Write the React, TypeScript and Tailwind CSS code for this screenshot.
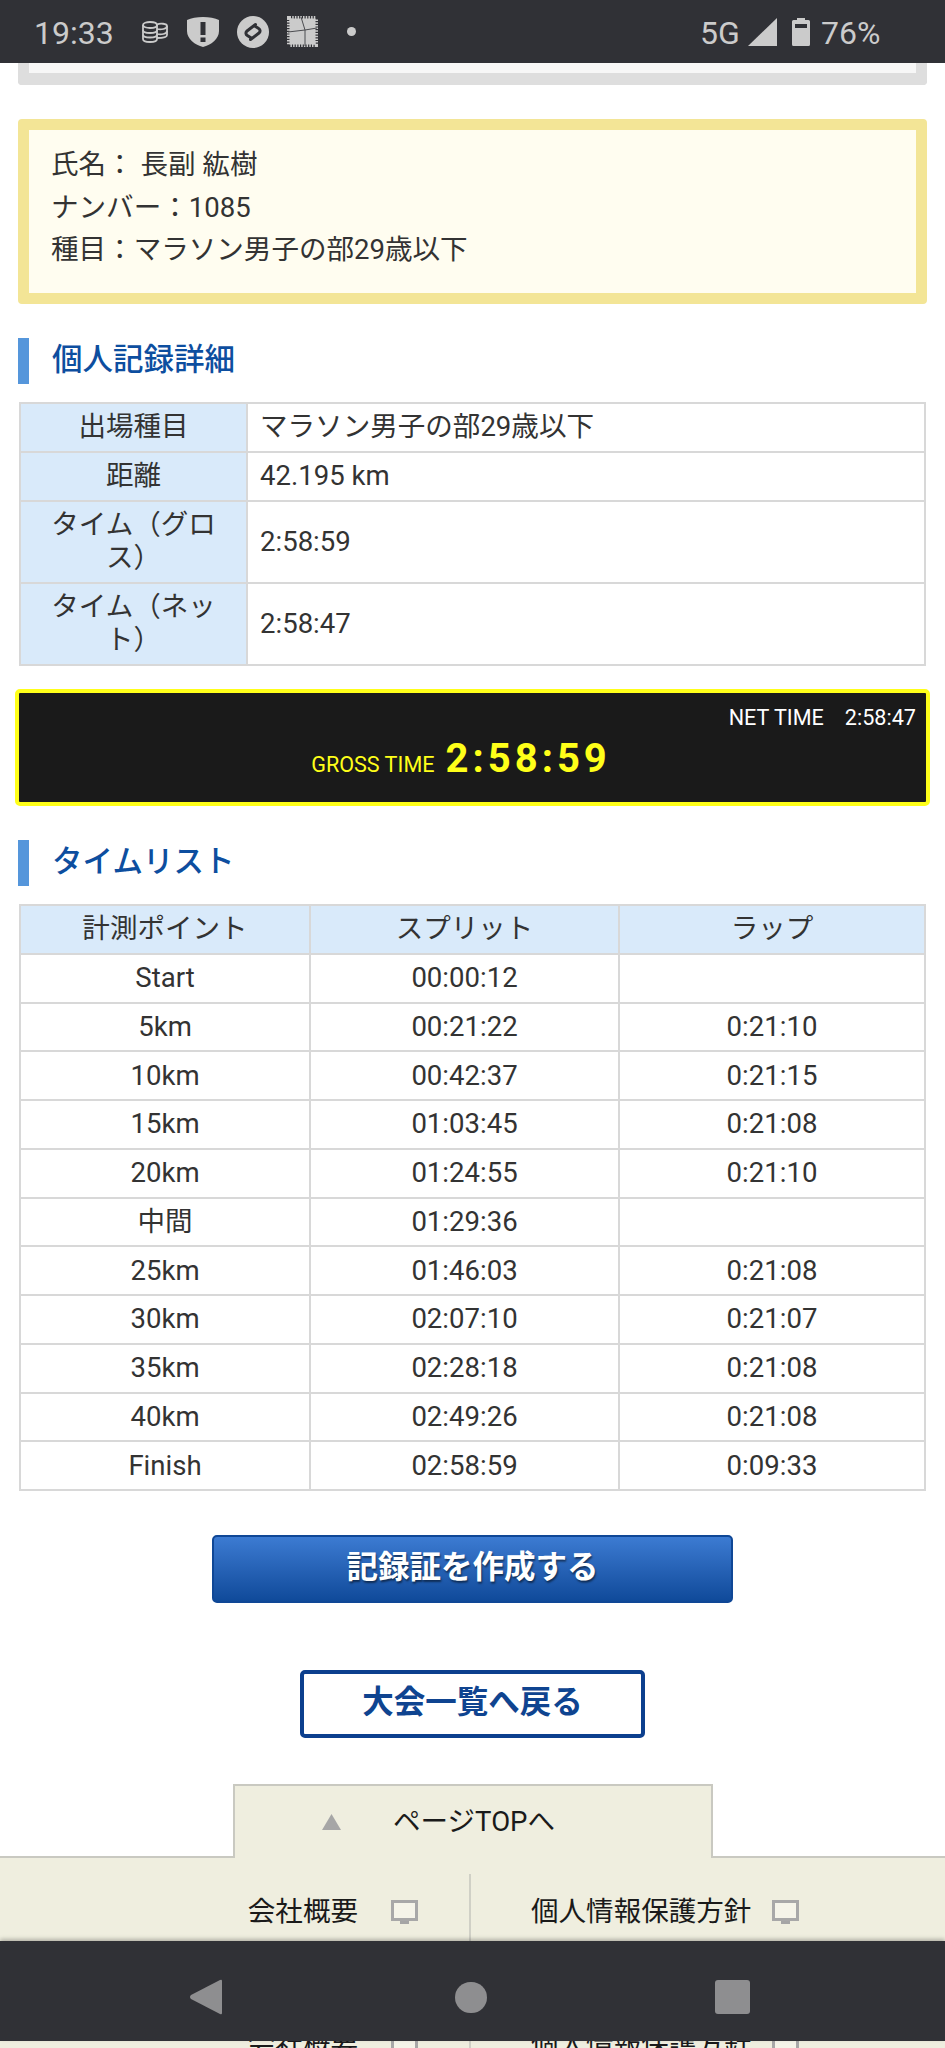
import React from "react";

const rows = [
  ["Start", "00:00:12", ""],
  ["5km", "00:21:22", "0:21:10"],
  ["10km", "00:42:37", "0:21:15"],
  ["15km", "01:03:45", "0:21:08"],
  ["20km", "01:24:55", "0:21:10"],
  ["中間", "01:29:36", ""],
  ["25km", "01:46:03", "0:21:08"],
  ["30km", "02:07:10", "0:21:07"],
  ["35km", "02:28:18", "0:21:08"],
  ["40km", "02:49:26", "0:21:08"],
  ["Finish", "02:58:59", "0:09:33"],
];

const cell = "border-2 border-[#d8d8d8] h-[49px] pt-0 pb-[2px] leading-[33px]";
const listCell = "border-2 border-[#d8d8d8] h-[48.75px] pt-0 pb-[1px] leading-[33px]";

function StatusBar() {
  return (
    <div className="h-[63px] shrink-0 bg-[#303136] flex items-center text-[#cbcbcb] relative z-10">
      <span className="ml-[34px] w-[78px] text-[32px] leading-none pt-[2px]">19:33</span>
      <svg className="ml-[30px]" width="26" height="22" viewBox="0 0 26 22" fill="none" stroke="#cbcbcb" strokeWidth="1.8">
        <path d="M1 4c0-2 3.5-3 7-3s7 1 7 3-3.5 3-7 3-7-1-7-3z" />
        <path d="M1 4v14c0 2 3.5 3 7 3s7-1 7-3V4" />
        <path d="M1 9c0 2 3.5 3 7 3s7-1 7-3" />
        <path d="M1 13.500c0 2 3.500 3 7 3s7-1 7-3" />
        <path d="M15 3.500c3-1.500 10-1 10 1.500v9c0 2-5 3-10 3" />
        <path d="M15 8c4 1 10 0 10-3" />
        <path d="M15 13c4 1 10 0 10-3" />
      </svg>
      <svg className="ml-[19px]" width="32" height="30" viewBox="0 0 32 30">
        <path d="M16 0C22 0 28 1 32 3V14C32 22 24 28 16 30C8 28 0 22 0 14V3C4 1 10 0 16 0Z" fill="#cbcbcb" />
        <rect x="13.500" y="5" width="5" height="13" fill="#303136" />
        <rect x="13.500" y="20.500" width="5" height="4.500" fill="#303136" />
      </svg>
      <svg className="ml-[18px]" width="32" height="32" viewBox="0 0 32 32" fill="none">
        <circle cx="16" cy="16" r="16" fill="#cbcbcb" />
        <path d="M18.500 8.500L10 15a2.700 2.700 0 0 0 .3 4.500l4 2.500" stroke="#303136" strokeWidth="3" strokeLinecap="round" />
        <path d="M13.500 23.500L22 17a2.700 2.700 0 0 0-.3-4.500l-4-2.500" stroke="#303136" strokeWidth="3" strokeLinecap="round" />
      </svg>
      <svg className="ml-[18px]" width="31" height="31" viewBox="0 0 31 31" fill="none">
        <rect x="2.500" y="2.500" width="26" height="26" fill="#cbcbcb" stroke="#cbcbcb" strokeWidth="5" strokeDasharray="1.500 1.200" />
        <rect x="4" y="4" width="23" height="23" fill="#cbcbcb" />
        <path d="M14 1L18 14V30M1 16L18 14L30 12" stroke="#4b4c50" strokeWidth="1" />
      </svg>
      <span className="ml-[29px] w-[9px] h-[9px] rounded-full bg-[#cbcbcb]" />
      <span className="ml-[344px] w-[39px] text-[32px] leading-none pt-[2px]">5G</span>
      <svg className="ml-[9px]" width="29" height="28" viewBox="0 0 29 28">
        <path d="M29 0V28H0Z" fill="#cbcbcb" />
      </svg>
      <svg className="ml-[15px]" width="18" height="28" viewBox="0 0 18 28">
        <path d="M5 2V0H13V2H16.500Q18 2 18 3.500V26.500Q18 28 16.500 28H1.500Q0 28 0 26.500V3.500Q0 2 1.500 2Z" fill="#cbcbcb" />
        <rect x="3" y="6" width="12" height="4" fill="#303136" />
      </svg>
      <span className="ml-[11px] text-[32px] leading-none pt-[2px]">76%</span>
    </div>
  );
}

function SectionTitle({ children }: { children: React.ReactNode }) {
  return (
    <h2 className="border-l-[11px] border-[#5596db] pl-[23px] h-[46px] text-[30.5px] leading-[44px] font-medium text-[#0d4e9f]">
      {children}
    </h2>
  );
}

function MonitorIcon() {
  return (
    <svg width="27" height="25" viewBox="0 0 27 25" className="shrink-0">
      <rect x="1.500" y="1.500" width="24" height="18" fill="#f5f4e9" stroke="#a8a8a8" strokeWidth="3" />
      <rect x="9" y="21" width="9" height="3" fill="#a5a5a5" />
    </svg>
  );
}

function FooterLinks() {
  return (
    <div className="grid grid-cols-[471px_1fr] text-[#1a1a1a] text-[27.56px] leading-[33px] h-[80px]">
      <div className="flex justify-end items-start pt-[21px] pr-[51px] border-r-2 border-[#d0d0c6]">
        <span>会社概要</span>
        <span className="ml-[33px] mt-[5px]"><MonitorIcon /></span>
      </div>
      <div className="flex items-start pt-[21px] pl-[60px]">
        <span>個人情報保護方針</span>
        <span className="ml-[21px] mt-[5px]"><MonitorIcon /></span>
      </div>
    </div>
  );
}

export default function App() {
  return (
    <div
      lang="ja"
      className="h-[2048px] w-[945px] overflow-hidden flex flex-col bg-white text-[#333] text-[27.56px] font-['Roboto','Noto_Sans_CJK_JP',sans-serif]"
    >
      <StatusBar />

      <div className="flex-1 min-h-0 overflow-hidden">
        <div className="mx-[18px]">
          <div className="h-[22px] border-x-[11px] border-b-[12px] border-[#dedede] bg-[#f7f7f7] rounded-b-[4px]" />

          <div className="mt-[34px] h-[185px] border-[11px] border-[#f3e596] rounded-[4px] bg-[#fffdf0] pt-[14px] pl-[22px] leading-[42.500px]">
            <p>氏名： 長副 紘樹</p>
            <p>ナンバー：1085</p>
            <p>種目：マラソン男子の部29歳以下</p>
          </div>

          <div className="mt-[34px]">
            <SectionTitle>個人記録詳細</SectionTitle>
          </div>

          <table className="mt-[18px] ml-px w-[907px] table-fixed border-collapse">
            <colgroup>
              <col className="w-[227px]" />
              <col />
            </colgroup>
            <tbody>
              <tr>
                <th className={`${cell} bg-[#d9eafa] font-normal px-5 text-center`}>出場種目</th>
                <td className={`${cell} px-[12px]`}>マラソン男子の部29歳以下</td>
              </tr>
              <tr>
                <th className={`${cell} bg-[#d9eafa] font-normal px-5 text-center`}>距離</th>
                <td className={`${cell} px-[12px]`}>42.195 km</td>
              </tr>
              <tr>
                <th className={`${cell} bg-[#d9eafa] font-normal px-5 text-center !h-[82px]`}>タイム（グロス）</th>
                <td className={`${cell} px-[12px] !h-[82px]`}>2:58:59</td>
              </tr>
              <tr>
                <th className={`${cell} bg-[#d9eafa] font-normal px-5 text-center !h-[82px]`}>タイム（ネット）</th>
                <td className={`${cell} px-[12px] !h-[82px]`}>2:58:47</td>
              </tr>
            </tbody>
          </table>

          <div className="mt-[23px] -mx-[3px] h-[117px] border-4 border-[#ffff19] rounded-[5px] bg-[#1a1a1a] pt-[12px]">
            <div className="flex justify-end pr-[10px] text-white text-[21.6px] leading-[26px]">
              <span>NET TIME</span>
              <span className="ml-[21px]">2:58:47</span>
            </div>
            <div className="flex justify-center items-baseline pr-[23px] pt-[4px] text-[#ffff19] leading-[48px]">
              <span className="text-[21.6px]">GROSS TIME</span>
              <span className="ml-[11px] text-[40px] font-bold tracking-[4px]">2:58:59</span>
            </div>
          </div>

          <div className="mt-[34px]">
            <SectionTitle>タイムリスト</SectionTitle>
          </div>

          <table className="mt-[18px] ml-px w-[907px] table-fixed border-collapse text-center">
            <colgroup>
              <col className="w-[290px]" />
              <col className="w-[309px]" />
              <col />
            </colgroup>
            <thead>
              <tr>
                <th className={`${listCell} bg-[#d9eafa] font-normal`}>計測ポイント</th>
                <th className={`${listCell} bg-[#d9eafa] font-normal`}>スプリット</th>
                <th className={`${listCell} bg-[#d9eafa] font-normal`}>ラップ</th>
              </tr>
            </thead>
            <tbody>
              {rows.map((r) => (
                <tr key={r[0]}>
                  <td className={listCell}>{r[0]}</td>
                  <td className={listCell}>{r[1]}</td>
                  <td className={listCell}>{r[2]}</td>
                </tr>
              ))}
            </tbody>
          </table>

          <div className="mt-[44px] mx-auto w-[521px] h-[68px] flex items-center justify-center rounded-[5px] border-2 border-[#0f4796] bg-gradient-to-b from-[#3c7bd2] to-[#0f4a9a] text-white text-[31.5px] font-bold pb-[3px] [text-shadow:1px_2px_2px_rgba(0,0,0,0.5)]">
            記録証を作成する
          </div>

          <div className="mt-[67px] mx-auto w-[345px] h-[68px] flex items-center justify-center rounded-[5px] border-4 border-[#0c3f8e] bg-white text-[#0f4490] text-[31.5px] font-bold pb-[3px]">
            大会一覧へ戻る
          </div>
        </div>

        <div className="mt-[46px] relative z-[1] -mb-[2px] ml-[233px] w-[480px] h-[74px] border-x-2 border-t-2 border-[#c9c9c1] bg-[#efeedf] flex items-center">
          <svg width="19" height="16" viewBox="0 0 19 16" className="ml-[87px]">
            <path d="M9.500 0L19 16H0Z" fill="#a6a6a6" />
          </svg>
          <span className="ml-[52px] text-[#1a1a1a]">ページTOPへ</span>
        </div>
        <div className="border-t-2 border-[#c9c9c1] bg-[#efeedf] h-[90px] pt-[16px]">
          <FooterLinks />
        </div>
      </div>

      <div className="h-[100px] shrink-0 bg-[#303136] relative z-10 shadow-[0_-2px_4px_rgba(0,0,0,0.25)] flex items-center pt-[12px]">
        <svg className="ml-[190px]" width="32" height="36" viewBox="0 0 32 36">
          <path d="M32 2V34Q32 36 30 35L1 20Q-1 18 1 16L30 1Q32 0 32 2Z" fill="#8e8e90" />
        </svg>
        <span className="ml-[233px] w-[32px] h-[31px] rounded-full bg-[#8e8e90]" />
        <span className="ml-[228px] w-[35px] h-[34px] rounded-[3px] bg-[#8e8e90]" />
      </div>

      <div className="h-[7px] shrink-0 overflow-hidden bg-[#efeedf]">
        <div className="-mt-[34px]">
          <FooterLinks />
        </div>
      </div>
    </div>
  );
}
